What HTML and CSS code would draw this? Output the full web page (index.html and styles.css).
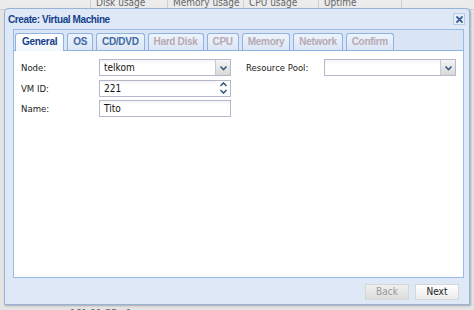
FILE: index.html
```html
<!DOCTYPE html>
<html lang="en">
<head>
    <meta charset="UTF-8">
    <meta name="viewport" content="width=device-width, initial-scale=1.0">
    <title>Create: Virtual Machine</title>
    <link rel="stylesheet" href="styles.css">
</head>
<body>
    <div class="grid">
        <div class="grid-head">
            <div class="col c1"></div>
            <div class="col c2">Disk usage</div>
            <div class="col c3">Memory usage</div>
            <div class="col c4">CPU usage</div>
            <div class="col c5">Uptime</div>
            <div class="col c6"></div>
        </div>
        <div class="grid-body"></div>
        <div class="grid-foot">161.89 GB &nbsp; 1</div>
    </div>

    <div class="win">
        <div class="win-title">
            <span>Create: Virtual Machine</span>
            <div class="close">
                <svg width="9" height="9" viewBox="0 0 9 9">
                    <path d="M2 2 L7 7 M7 2 L2 7" stroke="#3a5f96" stroke-width="1.8" stroke-linecap="round"/>
                </svg>
            </div>
        </div>
        <div class="panel">
            <div class="tabs">
                <div class="tab active">General</div>
                <div class="tab">OS</div>
                <div class="tab">CD/DVD</div>
                <div class="tab off">Hard Disk</div>
                <div class="tab off">CPU</div>
                <div class="tab off">Memory</div>
                <div class="tab off">Network</div>
                <div class="tab off">Confirm</div>
            </div>
            <div class="body">
                <div class="form-col">
                    <div class="row">
                        <label>Node:</label>
                        <div class="field">
                            <span class="val">telkom</span>
                            <div class="trigger">
                                <svg width="9" height="6" viewBox="0 0 9 6"><path d="M1.5 1.5 L4.5 4.5 L7.5 1.5" fill="none" stroke="#3d5a80" stroke-width="1.6"/></svg>
                            </div>
                        </div>
                    </div>
                    <div class="row">
                        <label>VM ID:</label>
                        <div class="field">
                            <span class="val">221</span>
                            <div class="spin">
                                <svg width="9" height="14" viewBox="0 0 9 14"><path d="M1.5 5 L4.5 2 L7.5 5 M1.5 9 L4.5 12 L7.5 9" fill="none" stroke="#3d5a80" stroke-width="1.6"/></svg>
                            </div>
                        </div>
                    </div>
                    <div class="row">
                        <label>Name:</label>
                        <div class="field">
                            <span class="val">Tito</span>
                        </div>
                    </div>
                </div>
                <div class="form-col">
                    <div class="row">
                        <label>Resource Pool:</label>
                        <div class="field">
                            <span class="val"></span>
                            <div class="trigger">
                                <svg width="9" height="6" viewBox="0 0 9 6"><path d="M1.5 1.5 L4.5 4.5 L7.5 1.5" fill="none" stroke="#3d5a80" stroke-width="1.6"/></svg>
                            </div>
                        </div>
                    </div>
                </div>
            </div>
        </div>
        <div class="footer">
            <div class="btn disabled">Back</div>
            <div class="btn">Next</div>
        </div>
    </div>
</body>
</html>
```

FILE: styles.css
```css
body,html{
    margin: 0;
    width: 100%;
    height: 100%;
    overflow: hidden;
}
body{
    font-family: "DejaVu Sans Condensed", "DejaVu Sans", sans-serif;
    font-size: 10px;
    background: #dcdcdc;
    position: relative;
}
.grid{
    display: flex;
    flex-direction: column;
    height: 100%;
}
.grid-head{
    display: flex;
    height: 9px;
    overflow: hidden;
    background: #ececec;
    border-bottom: 1px solid #d0d0d0;
}
.col{
    border-right: 1px solid #d0d0d0;
    color: #666;
    padding-left: 5px;
    line-height: 0px;
    padding-top: 3px;
    box-sizing: border-box;
    white-space: nowrap;
    overflow: hidden;
}
.c1{ width: 91px; }
.c2{ width: 77px; }
.c3{ width: 76px; }
.c4{ width: 75px; }
.c5{ width: 83px; }
.c6{ flex: 1; border-right: none; }
.grid-body{
    flex: 1;
    background: #e4e4e4;
}
.grid-foot{
    height: 4px;
    overflow: hidden;
    padding-left: 70px;
    color: #666;
    line-height: 16px;
    background: #e4e4e4;
    white-space: nowrap;
}
.win{
    position: absolute;
    left: 4px;
    top: 8px;
    width: 466px;
    height: 297px;
    box-sizing: border-box;
    border: 1px solid #99b3d6;
    border-radius: 4px 4px 0 0;
    background: #dfe8f6;
    box-shadow: 1px 1px 2px rgba(0,0,0,0.25);
    display: flex;
    flex-direction: column;
    padding: 0 5px 0 8px;
}
.win-title{
    height: 20px;
    display: flex;
    align-items: center;
    justify-content: space-between;
    margin-left: -5px;
    font-family: "Liberation Sans", Arial, sans-serif;
    font-weight: bold;
    color: #15428b;
    font-size: 10px;
    letter-spacing: -0.4px;
}
.close{
    width: 10px;
    height: 10px;
    border: 1px solid #b9cbe4;
    background: #e6eef9;
    display: flex;
    align-items: center;
    justify-content: center;
    margin-right: -1px;
}
.panel{
    display: flex;
    flex-direction: column;
    height: 249px;
}
.tabs{
    display: flex;
    height: 20px;
    align-items: flex-end;
    padding-left: 1px;
    border: 1px solid #99bbe8;
    border-bottom-color: #8db2e3;
    background: #d9e5f5;
    gap: 3px;
}
.tab{
    height: 16px;
    line-height: 16px;
    padding: 0 5px;
    border: 1px solid #8db2e3;
    border-bottom: none;
    border-radius: 3px 3px 0 0;
    background: linear-gradient(#eef4fc, #dbe6f5);
    color: #416aa3;
    font-family: "Liberation Sans", Arial, sans-serif;
    font-weight: bold;
    font-size: 10px;
    letter-spacing: -0.3px;
}
.tab.active{
    background: linear-gradient(#ffffff, #f3f7fc);
    color: #15428b;
    height: 17px;
    margin-bottom: -1px;
    padding: 0 6px;
}
.tab.off{
    color: #b7a9b2;
}
.body{
    flex: 1;
    background: #fff;
    border: 1px solid #99bbe8;
    border-top: none;
    display: flex;
    padding: 8px 0 0 7px;
    gap: 15px;
}
.form-col{
    display: flex;
    flex-direction: column;
    gap: 3.5px;
}
.row{
    display: flex;
    align-items: center;
    height: 17px;
}
.row label{
    width: 78px;
    color: #222;
    font-size: 9.5px;
}
.field{
    width: 132px;
    height: 17px;
    box-sizing: border-box;
    border: 1px solid #b5b8c8;
    background: linear-gradient(#f3f3f3, #fff 4px);
    display: flex;
    align-items: center;
    justify-content: space-between;
}
.val{
    padding-left: 4px;
    color: #111;
    font-size: 10px;
}
.trigger,.spin{
    width: 14px;
    height: 100%;
    display: flex;
    align-items: center;
    justify-content: center;
    border-left: 1px solid #c6cad6;
}
.trigger{
    background: linear-gradient(#f4f4f4, #d8d8d8);
}
.spin{
    background: #fff;
    border-left: none;
}
.footer{
    flex: 1;
    display: flex;
    justify-content: flex-end;
    align-items: center;
    gap: 6px;
    padding-right: 5px;
    padding-top: 2px;
}
.btn{
    width: 44px;
    height: 16px;
    box-sizing: border-box;
    line-height: 14px;
    text-align: center;
    color: #222;
    border: 1px solid #d6d6d6;
    background: linear-gradient(#ffffff, #ececec);
}
.btn.disabled{
    color: #999;
    background: linear-gradient(#efefef, #dcdcdc);
}
```
